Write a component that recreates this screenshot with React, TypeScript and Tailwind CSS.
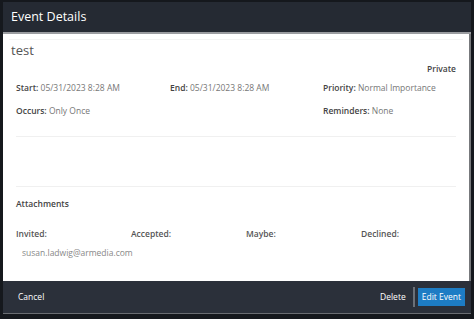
export default function App() {
  return (
    <div className="w-[474px] h-[319px] bg-[#15181d] pt-[2px] pl-[3px] pr-[3px] pb-[5px] font-['Open_Sans',sans-serif]">
      <div className="flex h-full flex-col">
        <div className="flex h-[30px] items-center bg-[#252a33] pl-[8px] text-[12.5px] text-white">
          Event Details
        </div>
        <div className="h-[2px] bg-[#9a9ca0]" />
        <div className="flex-1 border-r-2 border-[#77797c] bg-white">
          <div className="mx-[6px] mt-[5px] h-px bg-[#f4f4f4]" />
          <div className="mt-[1px] pl-[8px] text-[13px] leading-[18px] text-[#555]">test</div>
          <div className="px-[13px]">
            <div className="mt-[4px] flex justify-end text-[8.5px] font-semibold leading-[12px] text-[#444]">Private</div>
            <div className="mt-[7px] flex text-[8.5px] leading-[12px] text-[#777]">
              <div className="w-[154px]"><span className="font-semibold text-[#444]">Start:</span> 05/31/2023 8:28 AM</div>
              <div className="w-[153px]"><span className="font-semibold text-[#444]">End:</span> 05/31/2023 8:28 AM</div>
              <div><span className="font-semibold text-[#444]">Priority:</span> Normal Importance</div>
            </div>
            <div className="mt-[11px] flex text-[8.5px] leading-[12px] text-[#777]">
              <div className="w-[307px]"><span className="font-semibold text-[#444]">Occurs:</span> Only Once</div>
              <div><span className="font-semibold text-[#444]">Reminders:</span> None</div>
            </div>
            <div className="mt-[19px] h-px bg-[#f0f0f0]" />
            <div className="mt-[49px] h-px bg-[#f0f0f0]" />
            <div className="mt-[11px] text-[8.5px] font-semibold leading-[12px] text-[#444]">Attachments</div>
            <div className="mt-[18px] grid grid-cols-[115px_115px_115px_1fr] text-[8.5px] font-semibold leading-[12px] text-[#555]">
              <div>Invited:</div>
              <div>Accepted:</div>
              <div>Maybe:</div>
              <div>Declined:</div>
            </div>
            <div className="mt-[7px] pl-[6px] text-[8.5px] leading-[12px] text-[#888]">susan.ladwig@armedia.com</div>
          </div>
        </div>
        <div className="flex h-[32px] items-center bg-[#2b303a] pl-[15px] pr-[6px] text-[8.5px] text-white">
          <span>Cancel</span>
          <div className="ml-auto flex items-center">
            <span>Delete</span>
            <div className="ml-[7px] h-[20px] w-[2px] bg-[#6b7078]" />
            <button className="ml-[3px] h-[18px] bg-[#1d7cc4] px-[4px] text-[8.5px] text-white">Edit Event</button>
          </div>
        </div>
        <div className="h-[1px] bg-[#6a6d72]" />
      </div>
    </div>
  );
}
